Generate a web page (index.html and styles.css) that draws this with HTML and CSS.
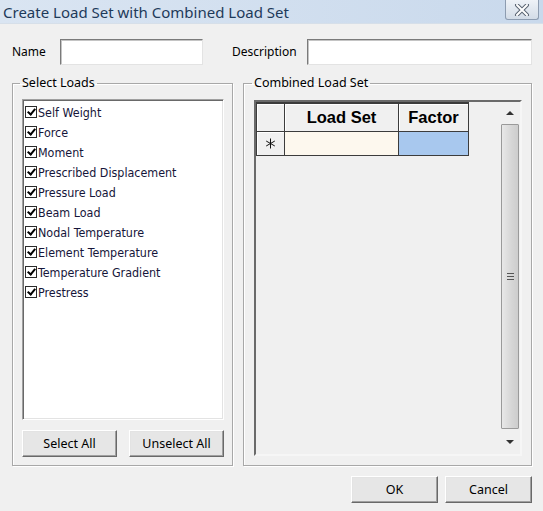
FILE: index.html
```html
<!doctype html>
<html>
<head>
<meta charset="UTF-8">
<meta name="viewport" content="width=device-width,initial-scale=1">
<title>Create Load Set with Combined Load Set</title>
<link rel="stylesheet" href="styles.css">
</head>
<body>
<div class="dialog">
	<div class="titlebar">
		<span class="title">Create Load Set with Combined Load Set</span>
		<button type="button" class="btn_close">
			<svg width="16" height="12" viewBox="0 0 16 12">
				<path d="M3 1 L13 11 M13 1 L3 11" stroke="#5a6472" stroke-width="4" stroke-linecap="round"/>
				<path d="M3 1 L13 11 M13 1 L3 11" stroke="#fff" stroke-width="2" stroke-linecap="round"/>
			</svg>
		</button>
	</div>

	<div class="content">
		<div class="fields">
			<label for="name" class="label_name">Name</label>
			<input type="text" id="name" class="input_name">
			<label for="desc" class="label_desc">Description</label>
			<input type="text" id="desc" class="input_desc">
		</div>

		<div class="groups">
			<fieldset class="group group_loads">
				<legend>Select Loads</legend>
				<ul class="load_list">
					<li><span class="check"></span>Self Weight</li>
					<li><span class="check"></span>Force</li>
					<li><span class="check"></span>Moment</li>
					<li><span class="check"></span>Prescribed Displacement</li>
					<li><span class="check"></span>Pressure Load</li>
					<li><span class="check"></span>Beam Load</li>
					<li><span class="check"></span>Nodal Temperature</li>
					<li><span class="check"></span>Element Temperature</li>
					<li><span class="check"></span>Temperature Gradient</li>
					<li><span class="check"></span>Prestress</li>
				</ul>
				<div class="list_btns">
					<button type="button" class="btn">Select All</button>
					<button type="button" class="btn">Unselect All</button>
				</div>
			</fieldset>

			<fieldset class="group group_combined">
				<legend>Combined Load Set</legend>
				<div class="grid">
					<div class="grid_body">
						<table class="sets">
							<tr>
								<th class="row_head"></th>
								<th class="col_set">Load Set</th>
								<th class="col_factor">Factor</th>
							</tr>
							<tr>
								<td class="row_head">
									<svg width="11" height="11" viewBox="0 0 11 11">
										<path d="M5.5 0.5 V10.5 M1.2 3 L9.8 8 M9.8 3 L1.2 8" stroke="#111" stroke-width="1"/>
									</svg>
								</td>
								<td class="cell_set"></td>
								<td class="cell_factor"></td>
							</tr>
						</table>
					</div>
					<div class="scrollbar">
						<span class="arrow arrow_up"></span>
						<div class="thumb"><span class="grip"></span></div>
						<span class="arrow arrow_down"></span>
					</div>
				</div>
			</fieldset>
		</div>

		<div class="footer">
			<button type="button" class="btn btn_ok">OK</button>
			<button type="button" class="btn btn_cancel">Cancel</button>
		</div>
	</div>
</div>
</body>
</html>
```

FILE: styles.css
```css
* {
	box-sizing: border-box;
}
body {
	margin: 0;
	background: #f0f0f0;
	font-family: "Noto Sans", "Open Sans", sans-serif;
	font-size: 12px;
	color: #000;
}
.dialog {
	width: 543px;
	height: 511px;
	overflow: hidden;
	background: #f0f0f0;
}

/* title bar */
.titlebar {
	display: flex;
	justify-content: space-between;
	align-items: flex-start;
	height: 24px;
	background: linear-gradient(to right, #dae5f2, #c9d9ec);
	border-bottom: 1px solid #d6dfe9;
}
.title {
	padding: 2px 0 0 3px;
	font-size: 15px;
	line-height: 20px;
	color: #1e3a5a;
}
.btn_close {
	display: flex;
	align-items: center;
	justify-content: center;
	width: 34px;
	height: 20px;
	margin-right: 4px;
	padding: 0;
	border: 1px solid #8d9cb0;
	border-top: none;
	border-radius: 0 0 3px 3px;
	background: linear-gradient(#eef2f7, #d3dce7);
}

.content {
	padding: 15px 11px 0 12px;
}

/* name / description */
.fields {
	display: flex;
	align-items: center;
	height: 26px;
}
.fields label {
	line-height: 26px;
}
.label_name {
	width: 48px;
}
.label_desc {
	width: 75px;
	margin-left: 29px;
}
.fields input {
	height: 26px;
	margin: 0;
	border: 1px solid;
	border-color: #7a7a7a #e3e3e3 #e3e3e3 #7a7a7a;
	box-shadow: inset 1px 1px 0 #c4c4c4;
	background: #fff;
}
.input_name {
	width: 143px;
}
.input_desc {
	width: 225px;
}

/* group boxes */
.groups {
	display: flex;
	gap: 10px;
	margin-top: 10px;
}
.group {
	margin: 0;
	height: 391px;
	border: 1px solid #a8a8a8;
	box-shadow: 1px 1px 0 #fff, inset 1px 1px 0 #fff;
	border-radius: 0;
}
.group legend {
	margin-left: -2px;
	padding: 0 2px;
	line-height: 16px;
	font-size: 12.5px;
}
.group_loads {
	width: 221px;
	padding: 8px 8px 0 9px;
}
.group_combined {
	width: 289px;
	padding: 9px 8px 0 10px;
}

/* load list */
.load_list {
	height: 321px;
	margin: 0;
	padding: 2px 0 0;
	list-style: none;
	background: #fff;
	border: 1px solid;
	border-color: #a0a0a0 #fff #fff #a0a0a0;
	box-shadow: inset 1px 1px 0 #696969, inset -1px -1px 0 #e3e3e3;
	font-family: "DejaVu Sans Condensed", "DejaVu Sans", sans-serif;
	font-stretch: condensed;
	font-size: 12.4px;
	color: #16163a;
}
.load_list li {
	display: flex;
	align-items: center;
	height: 20px;
	padding-left: 2px;
}
.check {
	position: relative;
	width: 12px;
	height: 12px;
	margin-right: 1px;
	border: 1px solid #2a2a2a;
	background: #fff;
}
.check:after {
	content: "";
	position: absolute;
	left: 3px;
	top: 0;
	width: 3px;
	height: 6px;
	border: solid #000;
	border-width: 0 2px 2px 0;
	transform: rotate(40deg);
}
.list_btns {
	display: flex;
	justify-content: space-between;
	margin-top: 10px;
}

/* buttons */
.btn {
	height: 27px;
	padding: 0;
	border: 1px solid;
	border-color: #fff #696969 #696969 #fff;
	box-shadow: inset -1px -1px 0 #a0a0a0, inset 1px 1px 0 #e3e3e3;
	background: #e6e6e6;
	font-family: inherit;
	font-size: 12.5px;
	color: #000;
}
.list_btns .btn {
	width: 95px;
}

/* combined load set grid */
.grid {
	display: flex;
	width: 268px;
	height: 356px;
	border: 2px solid;
	border-color: #6a6a6a #f6f6f6 #f6f6f6 #6a6a6a;
	background: #f0f0f0;
}
.grid_body {
	flex: 1;
}
.sets {
	border-collapse: collapse;
	font-family: "Liberation Sans", Arial, sans-serif;
}
.sets th, .sets td {
	padding: 0;
	border: 1px solid #3c3c3c;
}
.sets th {
	height: 28px;
	background: #f0f0f0;
	box-shadow: inset 1px 1px 0 #fff;
	font-size: 16.5px;
	font-weight: bold;
	text-align: center;
}
.sets tr:first-child th {
	border-top: 2px solid #3c3c3c;
}
.sets td {
	height: 24px;
}
.row_head {
	width: 28px;
}
.sets td.row_head {
	background: #f0f0f0;
	text-align: center;
	vertical-align: middle;
	box-shadow: inset 1px 1px 0 #fff;
}
.sets td.row_head svg {
	display: block;
	margin: 0 auto;
}
.col_set {
	width: 114px;
}
.col_factor {
	width: 70px;
}
.cell_set {
	background: #fdf8ee;
}
.cell_factor {
	background: #a8c8ee;
}

/* scrollbar */
.scrollbar {
	display: flex;
	flex-direction: column;
	width: 20px;
	padding: 0 1px 0 1px;
}
.arrow {
	display: flex;
	justify-content: center;
	align-items: center;
	height: 22px;
}
.arrow:after {
	content: "";
	border-left: 4px solid transparent;
	border-right: 4px solid transparent;
}
.arrow_up:after {
	border-bottom: 4px solid #333;
}
.arrow_down {
	height: 25px;
}
.arrow_down:after {
	border-top: 4px solid #333;
}
.thumb {
	display: flex;
	align-items: center;
	justify-content: center;
	height: 307px;
	border: 1px solid #9a9a9a;
	border-radius: 1px;
	background: linear-gradient(to right, #e8e8e8, #d6d6d6 60%, #cdcdcd);
}
.grip {
	width: 7px;
	height: 7px;
	background: repeating-linear-gradient(#555 0 1px, transparent 1px 3px);
}

/* dialog buttons */
.footer {
	display: flex;
	justify-content: flex-end;
	gap: 7px;
	margin-top: 10px;
}
.footer .btn {
	width: 87px;
}
```
